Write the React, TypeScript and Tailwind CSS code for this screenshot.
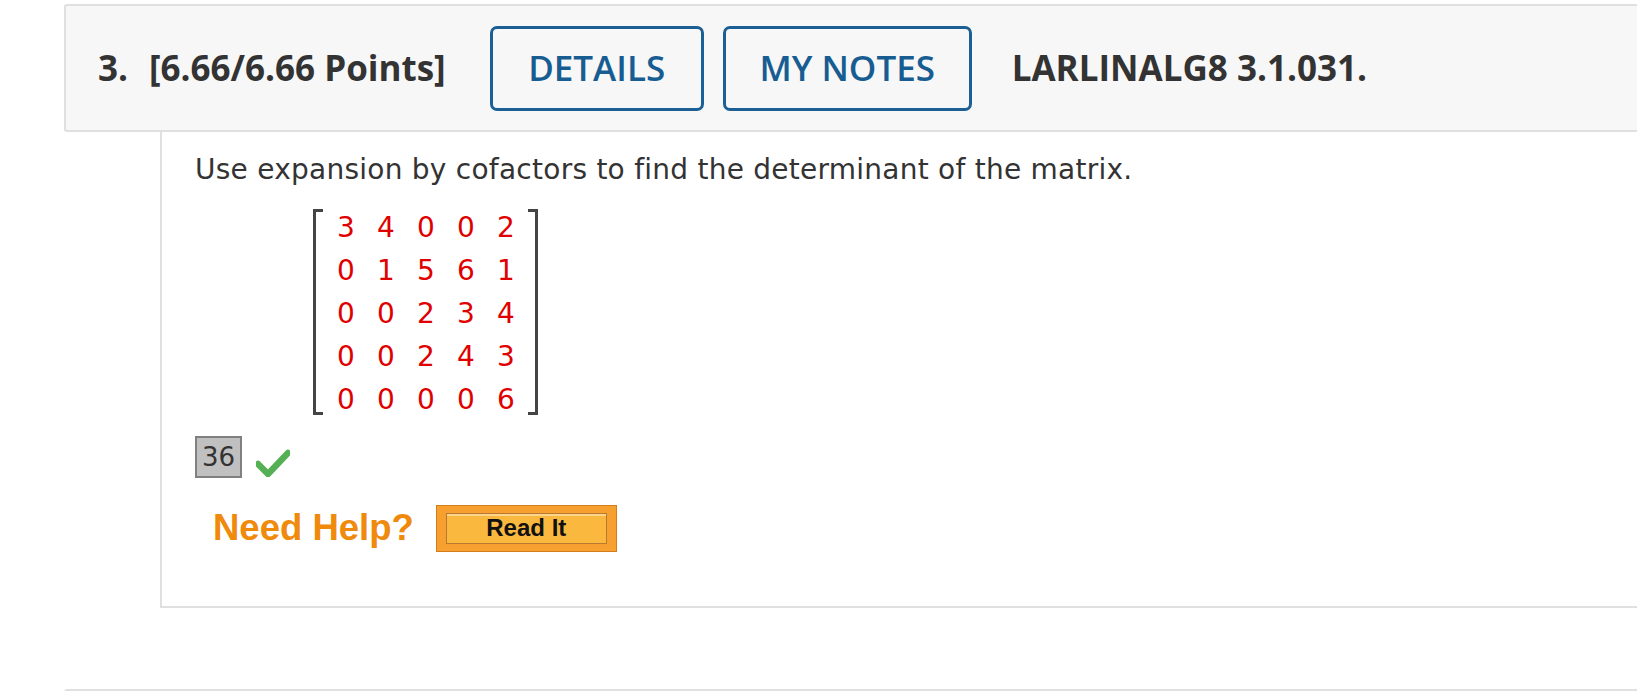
const matrix = [
  [3, 4, 0, 0, 2],
  [0, 1, 5, 6, 1],
  [0, 0, 2, 3, 4],
  [0, 0, 2, 4, 3],
  [0, 0, 0, 0, 6],
];

function CheckMark() {
  return (
    <svg width="34" height="28" viewBox="0 0 34 28" className="mt-[13px]">
      <path
        d="M2 15 L12 25 L32 4"
        fill="none"
        stroke="#55b055"
        strokeWidth="6.5"
        strokeLinecap="round"
        strokeLinejoin="round"
      />
    </svg>
  );
}

function App() {
  return (
    <div className="w-[1637px] h-[691px] overflow-hidden bg-white pt-[4px] pl-[64px]">
      {/* Header */}
      <div
        className="flex items-center w-[1600px] h-[128px] bg-[#f7f7f7] border-2 border-[#e0e0e0] rounded-[3px] pl-[32px] text-[#333]"
        style={{ fontFamily: '"Open Sans", sans-serif' }}
      >
        <span className="text-[35px] font-bold">3.</span>
        <span className="text-[35px] font-bold ml-[21px]">[6.66/6.66 Points]</span>
        <button className="ml-[44px] w-[214px] h-[85px] border-[3px] border-[#1b5f94] rounded-[7px] text-[35px] text-[#185d92] font-semibold bg-transparent">
          DETAILS
        </button>
        <button className="ml-[19px] w-[249px] h-[85px] border-[3px] border-[#1b5f94] rounded-[7px] text-[35px] text-[#185d92] font-semibold bg-transparent">
          MY NOTES
        </button>
        <span className="ml-[40px] text-[35px] font-bold">LARLINALG8 3.1.031.</span>
      </div>

      {/* Question body */}
      <div
        className="ml-[96px] w-[1500px] border-l-2 border-b-2 border-[#e0e0e0] pl-[33px] pt-[21px] pb-[50px]"
        style={{ fontFamily: '"DejaVu Sans", Verdana, sans-serif' }}
      >
        <p className="text-[28px] leading-[34px] tracking-[0.25px] text-[#333]">
          Use expansion by cofactors to find the determinant of the matrix.
        </p>

        <div className="flex items-start ml-[118px] mt-[19px]">
          <div className="mt-[3px] w-[10px] h-[206px] border-l-[3px] border-t-[3px] border-b-[3px] border-[#444]" />
          <div className="grid grid-cols-5 ml-[3px]">
            {matrix.flat().map((n, i) => (
              <div key={i} className="w-[40px] text-center text-[28px] leading-[43px] text-[#e00000]">
                {n}
              </div>
            ))}
          </div>
          <div className="mt-[3px] ml-[2px] w-[10px] h-[206px] border-r-[3px] border-t-[3px] border-b-[3px] border-[#444]" />
        </div>

        <div className="flex items-start mt-[15px]">
          <div className="w-[47px] h-[42px] bg-[#c0c0c0] border-2 border-[#808080] flex items-center justify-center text-[26px] text-[#333]">
            36
          </div>
          <div className="ml-[14px]">
            <CheckMark />
          </div>
        </div>

        <div className="flex items-center mt-[23px] ml-[18px]" style={{ fontFamily: '"Liberation Sans", Arial, sans-serif' }}>
          <span className="text-[36.5px] font-bold text-[#f08a0c]">Need Help?</span>
          <div className="ml-[22px] w-[181px] h-[47px] bg-[#f7a030] border border-[#d27d1e] px-[9px] py-[7px]">
            <div className="w-full h-full bg-[#fbb83f] border border-[#b87a30] shadow-[inset_0_2px_0_#fdd58a] flex items-center justify-center text-[24px] font-bold text-[#111]">
              Read It
            </div>
          </div>
        </div>
      </div>

      {/* Next question header top */}
      <div className="mt-[81px] w-[1600px] h-[20px] bg-[#f7f7f7] border-2 border-[#e0e0e0] rounded-[3px]" />
    </div>
  );
}

export default App;
